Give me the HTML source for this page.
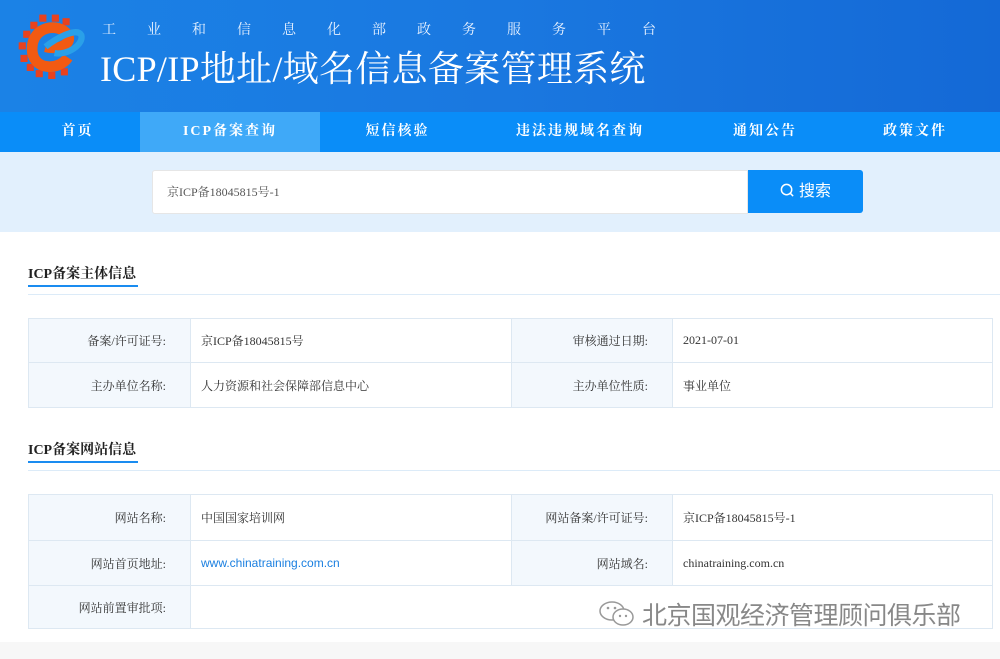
<!DOCTYPE html>
<html><head><meta charset="utf-8"><style>
*{margin:0;padding:0;box-sizing:border-box}
body{width:1000px;height:659px;overflow:hidden;background:#fff;font-family:"Liberation Serif","Noto Serif CJK SC",serif;position:relative}
.hd{position:absolute;left:0;top:0;width:1000px;height:112px;background:linear-gradient(90deg,#1b82e6 0%,#1a78e0 50%,#1469d6 100%)}
.sub{position:absolute;left:102px;top:19px;color:#e8f2ff;font-size:14px;letter-spacing:0;white-space:nowrap}
.sub span{display:inline-block;width:45px}
.ttl{position:absolute;left:100px;top:41px;color:#fff;font-size:36px;white-space:nowrap;letter-spacing:0.3px}
.nav{position:absolute;left:0;top:112px;width:1000px;height:40px;background:#0a8df8}
.nav div{position:absolute;top:0;height:40px;line-height:40px;color:#fff;font-size:14px;letter-spacing:2px;text-align:center;font-weight:bold}
.sr{position:absolute;left:0;top:152px;width:1000px;height:80px;background:#e2f0fd}
.inp{position:absolute;left:152px;top:170px;width:596px;height:44px;background:#fff;border:1px solid #e6e6e6;border-radius:3px 0 0 3px;font-size:12px;color:#555;line-height:42px;padding-left:14px}
.btn{position:absolute;left:748px;top:170px;width:115px;height:43px;background:#0a8df8;border-radius:0 3px 3px 0;color:#fff;font-size:16px;line-height:43px;text-align:center;font-family:"Liberation Sans","Noto Sans CJK SC",sans-serif}
.sec{position:absolute;left:28px;font-size:14px;font-weight:bold;color:#222}
.ul{position:absolute;left:28px;width:110px;height:2px;background:#1a8cf0}
.ln{position:absolute;left:28px;width:972px;height:1px;background:#dcebf8}
.c{position:absolute;border:1px solid #dde8f2;font-size:12px;color:#333;line-height:normal;display:flex;align-items:center}
.l{background:#f3f8fd;justify-content:flex-end;padding-right:24px}
.v{background:#fff;padding-left:10px}
.foot{position:absolute;left:0;top:642px;width:1000px;height:17px;background:#f7f7f7}
</style></head><body>
<div class="hd">
<svg style="position:absolute;left:14px;top:11px" width="72" height="68" viewBox="10 8 80 76">
<g fill="#e8421f">
<rect x="38" y="12" width="8" height="8"/><rect x="52" y="12" width="8" height="8"/><rect x="64" y="16" width="8" height="8"/>
<rect x="28" y="20" width="8" height="8"/><rect x="20" y="30" width="8" height="8"/><rect x="15" y="43" width="8" height="8"/>
<rect x="17" y="57" width="8" height="8"/><rect x="24" y="67" width="8" height="8"/><rect x="34" y="74" width="8" height="8"/>
<rect x="48" y="76" width="8" height="8"/><rect x="62" y="72" width="8" height="8"/></g>
<path d="M70 60 C60 75 30 75 30 50 C30 25 60 20 70 35 C75 45 60 52 45 48" fill="none" stroke="#f25a12" stroke-width="12"/>
<path d="M45 48 C55 40 80 25 85 35 C88 45 70 58 55 55" fill="none" stroke="#2aa0e8" stroke-width="7"/>
</svg>
<div class="sub"><span>工</span><span>业</span><span>和</span><span>信</span><span>息</span><span>化</span><span>部</span><span>政</span><span>务</span><span>服</span><span>务</span><span>平</span><span>台</span></div>
<div class="ttl">ICP/IP地址/域名信息备案管理系统</div>
</div>
<div class="nav">
<div style="left:0;width:155px">首页</div>
<div style="left:140px;width:180px;background:#3fa9f8">ICP备案查询</div>
<div style="left:320px;width:155px">短信核验</div>
<div style="left:475px;width:210px">违法违规域名查询</div>
<div style="left:685px;width:160px">通知公告</div>
<div style="left:845px;width:140px">政策文件</div>
</div>
<div class="sr"></div>
<div class="inp">京ICP备18045815号-1</div>
<div class="btn"><svg width="15" height="15" viewBox="0 0 16 16" style="vertical-align:-2px;margin-right:4px"><circle cx="7" cy="7" r="5.5" fill="none" stroke="#fff" stroke-width="1.6"/><line x1="11" y1="11" x2="14" y2="14" stroke="#fff" stroke-width="1.6"/></svg>搜索</div>

<div class="sec" style="top:263px">ICP备案主体信息</div>
<div class="ul" style="top:285px"></div>
<div class="ln" style="top:294px"></div>
<div class="c l" style="left:28px;top:318px;width:163px;height:45px">备案/许可证号:</div>
<div class="c v" style="left:190px;top:318px;width:322px;height:45px">京ICP备18045815号</div>
<div class="c l" style="left:511px;top:318px;width:162px;height:45px">审核通过日期:</div>
<div class="c v" style="left:672px;top:318px;width:321px;height:45px">2021-07-01</div>
<div class="c l" style="left:28px;top:362px;width:163px;height:46px">主办单位名称:</div>
<div class="c v" style="left:190px;top:362px;width:322px;height:46px">人力资源和社会保障部信息中心</div>
<div class="c l" style="left:511px;top:362px;width:162px;height:46px">主办单位性质:</div>
<div class="c v" style="left:672px;top:362px;width:321px;height:46px">事业单位</div>

<div class="sec" style="top:439px">ICP备案网站信息</div>
<div class="ul" style="top:461px"></div>
<div class="ln" style="top:470px"></div>
<div class="c l" style="left:28px;top:494px;width:163px;height:47px">网站名称:</div>
<div class="c v" style="left:190px;top:494px;width:322px;height:47px">中国国家培训网</div>
<div class="c l" style="left:511px;top:494px;width:162px;height:47px">网站备案/许可证号:</div>
<div class="c v" style="left:672px;top:494px;width:321px;height:47px">京ICP备18045815号-1</div>
<div class="c l" style="left:28px;top:540px;width:163px;height:46px">网站首页地址:</div>
<div class="c v" style="left:190px;top:540px;width:322px;height:46px;color:#1a7fe0;font-family:'Liberation Sans',sans-serif">www.chinatraining.com.cn</div>
<div class="c l" style="left:511px;top:540px;width:162px;height:46px">网站域名:</div>
<div class="c v" style="left:672px;top:540px;width:321px;height:46px">chinatraining.com.cn</div>
<div class="c l" style="left:28px;top:585px;width:163px;height:44px">网站前置审批项:</div>
<div class="c v" style="left:190px;top:585px;width:803px;height:44px"></div>
<svg style="position:absolute;left:598px;top:599px" width="40" height="30" viewBox="0 0 40 30"><ellipse cx="14" cy="12" rx="12" ry="9" fill="none" stroke="#999" stroke-width="1.5"/><ellipse cx="25" cy="18" rx="10" ry="8" fill="#fff" stroke="#999" stroke-width="1.5"/><circle cx="10" cy="9" r="1.3" fill="#999"/><circle cx="17" cy="9" r="1.3" fill="#999"/><circle cx="22" cy="17" r="1.2" fill="#999"/><circle cx="28" cy="17" r="1.2" fill="#999"/></svg>
<div style="position:absolute;left:642px;top:596px;font-family:'Liberation Sans','Noto Sans CJK SC',sans-serif;font-size:25px;color:#888;white-space:nowrap;letter-spacing:-0.5px">北京国观经济管理顾问俱乐部</div>
<div class="foot"></div>
</body></html>
